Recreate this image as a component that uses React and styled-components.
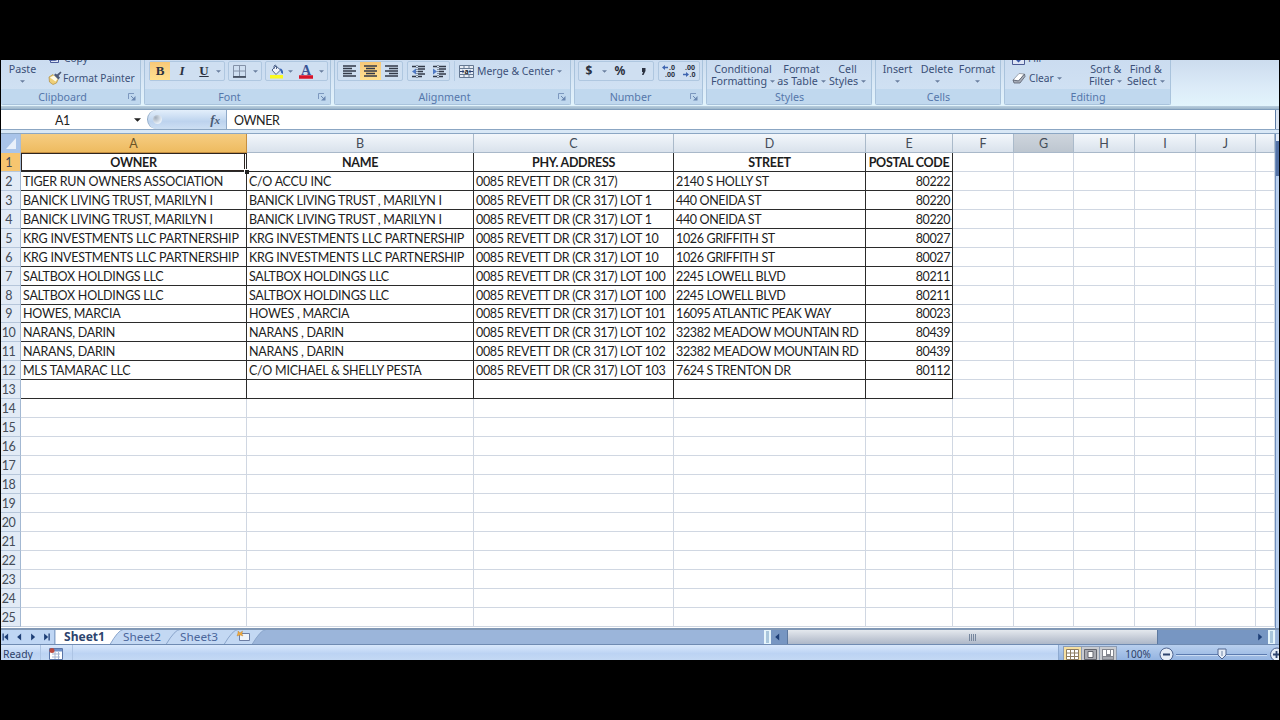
import styled, { createGlobalStyle, css } from 'styled-components';

const GlobalStyle = createGlobalStyle`
    * {
        box-sizing: border-box;
    }

    body {
        margin: 0;
        background: #000;
        overflow: hidden;
    }
`;

const COLUMNS = '20px 226px 227px 200px 192px 87px 61px 60px 61px 61px 60px 1fr';
const LETTERS = ['A', 'B', 'C', 'D', 'E', 'F', 'G', 'H', 'I', 'J', ''];

// Letter spacing of each data column
const TRACKING = ['-0.24px', '-0.26px', '-0.32px', '-0.36px', '-0.4px'];

const ROWS = [
    ['OWNER', 'NAME', 'PHY. ADDRESS', 'STREET', 'POSTAL CODE'],
    ['TIGER RUN OWNERS ASSOCIATION', 'C/O ACCU INC', '0085 REVETT DR (CR 317)', '2140 S HOLLY ST', '80222'],
    ['BANICK LIVING TRUST, MARILYN I', 'BANICK LIVING TRUST , MARILYN I', '0085 REVETT DR (CR 317) LOT 1', '440 ONEIDA ST', '80220'],
    ['BANICK LIVING TRUST, MARILYN I', 'BANICK LIVING TRUST , MARILYN I', '0085 REVETT DR (CR 317) LOT 1', '440 ONEIDA ST', '80220'],
    ['KRG INVESTMENTS LLC PARTNERSHIP', 'KRG INVESTMENTS LLC PARTNERSHIP', '0085 REVETT DR (CR 317) LOT 10', '1026 GRIFFITH ST', '80027'],
    ['KRG INVESTMENTS LLC PARTNERSHIP', 'KRG INVESTMENTS LLC PARTNERSHIP', '0085 REVETT DR (CR 317) LOT 10', '1026 GRIFFITH ST', '80027'],
    ['SALTBOX HOLDINGS LLC', 'SALTBOX HOLDINGS LLC', '0085 REVETT DR (CR 317) LOT 100', '2245 LOWELL BLVD', '80211'],
    ['SALTBOX HOLDINGS LLC', 'SALTBOX HOLDINGS LLC', '0085 REVETT DR (CR 317) LOT 100', '2245 LOWELL BLVD', '80211'],
    ['HOWES, MARCIA', 'HOWES , MARCIA', '0085 REVETT DR (CR 317) LOT 101', '16095 ATLANTIC PEAK WAY', '80023'],
    ['NARANS, DARIN', 'NARANS , DARIN', '0085 REVETT DR (CR 317) LOT 102', '32382 MEADOW MOUNTAIN RD', '80439'],
    ['NARANS, DARIN', 'NARANS , DARIN', '0085 REVETT DR (CR 317) LOT 102', '32382 MEADOW MOUNTAIN RD', '80439'],
    ['MLS TAMARAC LLC', 'C/O MICHAEL & SHELLY PESTA', '0085 REVETT DR (CR 317) LOT 103', '7624 S TRENTON DR', '80112'],
    ['', '', '', '', '']
];

const Window = styled.div`
    width: 1278px;
    height: 600px;
    margin: 60px 0 0 1px;
    display: flex;
    flex-direction: column;
    overflow: hidden;
    background: #fff;
    font-family: 'Noto Sans', sans-serif;
    font-size: 10.7px;
    color: #3b5078;
    white-space: nowrap;
`;

/* ---------- ribbon ---------- */

const Ribbon = styled.div`
    height: 46px;
    flex: none;
    display: flex;
    gap: 3px;
    background: linear-gradient(#ccdcee, #dcebf8 60%, #e2f4fc);
`;

const Group = styled.div`
    width: ${p => p.$width}px;
    height: 45px;
    flex: none;
    display: flex;
    flex-direction: column;
    overflow: hidden;
    border: solid #a9c3dc;
    border-width: 0 1px 1px ${p => (p.$first ? 0 : '1px')};
    border-radius: 0 0 2px 2px;
    background: linear-gradient(#cbdcf0, #d2e3f4);
`;

const GroupBody = styled.div`
    height: 29px;
    flex: none;
    display: flex;
    align-items: flex-end;
    padding-left: ${p => p.$pad || 0}px;
    gap: ${p => p.$gap || 0}px;
`;

const GroupLabel = styled.div`
    height: 15px;
    flex: none;
    display: flex;
    align-items: center;
    padding-right: ${p => (p.$plain ? 0 : 4)}px;
    background: #c0d8ee;
    color: #5577ab;

    span {
        flex: 1;
        text-align: center;
        padding-right: ${p => (p.$plain ? 0 : 4)}px;
        padding-left: ${p => (p.$plain ? 1 : 0)}px;
    }
`;

const ToolBox = styled.div`
    width: ${p => p.$width}px;
    height: 20px;
    margin-bottom: 8px;
    flex: none;
    display: flex;
    align-items: center;
    justify-content: space-between;
    padding-right: ${p => (p.$tight ? 0 : 3)}px;
    border: 1px solid #afc7e0;
    border-radius: 2px;
    background: #cfdff1;
`;

const Tool = styled.div`
    width: ${p => p.$width || 20}px;
    height: 18px;
    display: flex;
    align-items: center;
    justify-content: center;
    color: #2b3140;
    ${p => p.$active && css`
        background: linear-gradient(#f7c877, #fbd588 50%, #ffe08c);
    `}
`;

const Glyph = styled.span`
    font-family: ${p => (p.$sans ? "'Noto Sans', sans-serif" : "'Liberation Serif', serif")};
    font-size: ${p => p.$size || 13}px;
    font-weight: ${p => (p.$light ? 400 : 700)};
    font-style: ${p => (p.$italic ? 'italic' : 'normal')};
    text-decoration: ${p => (p.$underline ? 'underline' : 'none')};
    line-height: 18px;
`;

const Merge = styled.div`
    height: 20px;
    margin-bottom: 8px;
    display: flex;
    align-items: center;
    gap: 3px;
    padding-left: 4px;
    border-left: 1px solid #b4cbe3;
    font-size: 10.4px;
`;

const BigButton = styled.div`
    width: ${p => p.$width}px;
    height: 26px;
    flex: none;
    display: flex;
    flex-direction: column;
    align-items: center;
    line-height: 12px;

    div {
        display: flex;
        align-items: center;
        justify-content: center;
        gap: 3px;
        height: 12px;
        flex: none;
    }
`;

const SmallStack = styled.div`
    height: 29px;
    display: flex;
    flex-direction: column;
    justify-content: flex-end;
    padding-bottom: 1px;
    margin-left: ${p => p.$push || 0}px;
`;

const SmallButton = styled.div`
    height: 20px;
    flex: none;
    display: flex;
    align-items: center;
    gap: ${p => p.$gap || 3}px;
    font-size: 10.2px;
    line-height: 20px;
`;

const RibbonEdge = styled.div`
    height: 4px;
    flex: none;
    background: linear-gradient(#b9cfdf, #9db6ca);
    border-bottom: 1px solid #7f9dbb;
`;

/* ---------- formula bar ---------- */

const FormulaBar = styled.div`
    height: 19px;
    flex: none;
    display: flex;
    align-items: center;
    background: #fff;
    color: #222;
    font-family: Lato, sans-serif;
    font-size: 12.5px;
    letter-spacing: -0.4px;
`;

const NameBox = styled.div`
    width: 146px;
    display: flex;
    align-items: center;
    padding-right: 6px;

    span {
        flex: 1;
        padding: 2px 10px 0 0;
        text-align: center;
    }
`;

const FunctionBox = styled.div`
    width: 80px;
    height: 19px;
    display: flex;
    align-items: center;
    justify-content: space-between;
    padding: 0 6px 0 5px;
    border-right: 1px solid #8fa9c8;
    border-left: 1px solid #92acc9;
    border-radius: 10px 0 0 10px;
    background: linear-gradient(#e3effb, #bdd3ee 60%, #cddff3);
    font: italic 700 13px 'Liberation Serif', serif;
    letter-spacing: 0;
    color: #4b5a74;

    small {
        font-size: 11px;
    }
`;

const Knob = styled.i`
    width: 9px;
    height: 9px;
    border-radius: 50%;
    background: radial-gradient(circle at 30% 30%, #a3aebb, #e8f0f8 70%);
`;

const FormulaText = styled.div`
    flex: 1;
    padding: 2px 0 0 7px;
`;

const BarCap = styled.div`
    width: 4px;
    height: 19px;
    background: #dbe5f2;
    border-left: 1px solid #5f7ea6;
`;

const FormulaEdge = styled.div`
    height: 5px;
    flex: none;
    background: #d9e8f6;
    border: solid #8ba6c3;
    border-width: 1px 0;
`;

/* ---------- grid ---------- */

const SheetArea = styled.div`
    height: 494px;
    flex: none;
    display: flex;
    overflow: hidden;
`;

const Grid = styled.div`
    width: 1274px;
    flex: none;
`;

const SheetRow = styled.div`
    height: 18.96px;
    display: grid;
    grid-template-columns: ${COLUMNS};
`;

const HeaderRow = styled(SheetRow)`
    height: 18.9px;
`;

const ColumnHead = styled.div`
    display: flex;
    align-items: center;
    justify-content: center;
    padding-top: 3px;
    border-right: 1px solid #aabaca;
    border-bottom: 1px solid #a9b8c9;
    background: linear-gradient(#f3f7fb, #d9e2ec);
    font-family: Lato, sans-serif;
    font-size: 12.5px;
    line-height: 14px;
    color: #444c58;
    ${p => p.$hover && css`
        background: linear-gradient(#ced5dd, #bdc6d0);
    `}
    ${p => p.$selected && css`
        background: linear-gradient(#f6cd82, #eebb60);
        border-color: #c58f40;
        color: #6b5327;
    `}
`;

const Corner = styled.div`
    display: flex;
    align-items: flex-end;
    justify-content: flex-end;
    padding: 0 4px 4px 0;
    border-right: 1px solid #a9bdd6;
    background: #a9c4e9;

    i {
        border: solid transparent;
        border-width: 0 0 11px 10px;
        border-bottom-color: #e8f0fa;
    }
`;

const RowHead = styled.div`
    display: flex;
    align-items: center;
    justify-content: center;
    padding: 2px 4px 0 0;
    border-right: 1px solid #a3b8d2;
    border-bottom: 1px solid #b6c6da;
    background: ${p => (p.$selected ? '#f7c56f' : '#e2ebf6')};
    font-family: Lato, sans-serif;
    font-size: 12.5px;
    letter-spacing: -0.6px;
    line-height: 14px;
    color: #444c58;
`;

const Cell = styled.div`
    position: relative;
    display: flex;
    align-items: center;
    justify-content: ${p => p.$align || 'flex-start'};
    padding: 2px 2px 0 2px;
    border: solid ${p => (p.$filled ? '#2b2b2b' : '#d0d7e2')};
    border-width: 0 1px 1px 0;
    background: #fff;
    color: #1d1d1d;
    font-family: Lato, sans-serif;
    font-size: 12.5px;
    line-height: 14px;
    font-weight: ${p => (p.$bold ? 700 : 400)};
    letter-spacing: ${p => (p.$bold ? '-0.3px' : p.$tracking)};
    ${p => p.$selected && css`
        box-shadow: inset 1px 1px #2c2420, inset 0 -1px #2c2420, inset -1px 0 #fff, inset -2px 0 #2c2420;
    `}
`;

const FillHandle = styled.i`
    position: absolute;
    right: -3px;
    bottom: -3px;
    width: 5px;
    height: 5px;
    z-index: 1;
    background: #222;
    border: 1px solid #fff;
    border-width: 1px 0 0 1px;
`;

const VerticalScroll = styled.div`
    flex: 1;
    border-left: 1px solid #6f8fbd;
    background: linear-gradient(#e4edf7 0 7px, #5573a6 7px 42px, #b8cfee 42px);
`;

/* ---------- sheet tabs ---------- */

const TabBar = styled.div`
    height: 17px;
    flex: none;
    display: flex;
    border-top: 2px solid #8198b5;
    border-bottom: 1px solid #6f8bb2;
    background: #9bb5da;
`;

const TabNav = styled.div`
    width: 54px;
    display: flex;
    align-items: center;
    background: #bfd6f4;
    border-right: 1px solid #8da9cf;
`;

const Tabs = styled.svg`
    width: 214px;
    height: 14px;
    flex: none;
    font-family: 'Noto Sans', sans-serif;
    font-size: 11.5px;
`;

const Splitter = styled.div`
    width: 7px;
    margin-left: ${p => p.$push || 0}px;
    border: solid #e6f5fb;
    border-width: 1px 2px;
    background: #a9c6dc;
`;

const ScrollButton = styled.div`
    width: ${p => p.$width}px;
    display: flex;
    align-items: center;
    justify-content: ${p => p.$justify || 'center'};
    background: #7796c2;
`;

const Thumb = styled.div`
    width: 371px;
    display: flex;
    align-items: center;
    justify-content: center;
    gap: 1px;
    border: solid #5c789f;
    border-width: 0 1px;
    background: linear-gradient(#e4e8ee, #c3cad6 60%, #adb8c9);

    i {
        width: 1px;
        height: 7px;
        background: #76869d;
    }
`;

/* ---------- status bar ---------- */

const StatusBar = styled.div`
    height: 17px;
    flex: none;
    display: flex;
    align-items: flex-start;
    background: linear-gradient(#d9e8fc, #bcd3f3 50%, #c6daf4);
    color: #2d4168;
    font-size: 10.4px;
    line-height: 19px;
`;

const Ready = styled.div`
    width: 40px;
    height: 16px;
    padding-left: 2px;
    border-right: 1px solid #adc4e4;
`;

const MacroButton = styled.div`
    width: 32px;
    height: 16px;
    display: flex;
    padding: 2px 0 0 8px;
    border-right: 1px solid #adc4e4;
`;

const StatusRight = styled.div`
    width: 221px;
    height: 17px;
    margin-left: auto;
    display: flex;
    border-left: 1px solid #8eaad0;
    background: linear-gradient(#b8cfee, #8fb0df);
`;

const Views = styled.div`
    width: 54px;
    height: 16px;
    margin: 1px 0 0 4px;
    border: 1px solid #8c9cb4;
    border-bottom: 0;
    background: #c8cbd0;
`;

const ZoomText = styled.div`
    width: 42px;
    text-align: center;
    font-size: 10px;
`;

/* ---------- icons ---------- */

const Arrow = ({ color = '#6a7f9f', big }) => (
    <svg width={big ? 7 : 5} height={big ? 4 : 3} viewBox="0 0 6 3">
        <path d="M0 0h6L3 3z" fill={color} />
    </svg>
);

const Launcher = () => (
    <svg width="8" height="8" viewBox="0 0 8 8">
        <path d="M.5 6V.5H6" fill="none" stroke="#7c98bf" />
        <path d="M3 3l3 3" stroke="#6b88b2" />
        <path d="M7.500 3v4.500H3z" fill="#6b88b2" />
    </svg>
);

const Brush = () => (
    <svg width="14" height="14" viewBox="0 0 14 14">
        <path d="M1 6l4-2.500L10 8.500l-1.500 3.500L5 13.500 1.500 11z" fill="#efcf78" stroke="#b08c40" strokeWidth=".7" />
        <path d="M2 6.500l4-2 3.500 3.500-2 2.500z" fill="#fffbe9" />
        <path d="M6 4l4.500 4.500 1.500-2-1.500-1.500L13.500 1.500 12.500.5 9 3.500 7.500 2.500z" fill="#4f5a78" />
    </svg>
);

const CopyIcon = () => (
    <svg width="12" height="14" viewBox="0 0 12 14">
        <path d="M1.500 1.500h6v8h-6zM2.500 3.500h8v8h-8z" fill="#dfe6f6" stroke="#4b5c9b" />
        <path d="M4 7h5M4 9h5" stroke="#6a79b5" />
    </svg>
);

const Lines = ({ align }) => {
    const short = { left: 1, center: 3, right: 5 }[align];
    return (
        <svg width="15" height="12" viewBox="0 0 15 12">
            <path
                d={`M1 1h13M${short} 3.500h9M1 6h13M${short} 8.500h9M1 11h13`}
                stroke="#333a48"
                strokeWidth="1.300"
            />
        </svg>
    );
};

const Indent = ({ out }) => (
    <svg width="15" height="13" viewBox="0 0 15 13">
        <path d="M1 1.500h4M7 1.500h7M7 4h7M7 6.500h5M7 9h7M1 11.500h4M7 11.500h4" stroke="#333a48" strokeWidth="1.700" />
        <path d={out ? 'M5 3.500v6L1 6.500z' : 'M1 3.500v6l4-3z'} fill="#4f79c4" />
        <path d="M6 0v13" stroke="#333a48" strokeDasharray="1 1" />
    </svg>
);

const BordersIcon = () => (
    <svg width="13" height="13" viewBox="0 0 13 13">
        <path d="M.5.5h12v11H.5zM6.500.5v11M.5 6h12" fill="none" stroke="#8492a8" />
        <path d="M0 12h13" stroke="#333c4c" strokeWidth="1.500" />
    </svg>
);

const Bucket = () => (
    <svg width="15" height="15" viewBox="0 0 15 15">
        <path d="M3 6l4-4 4.500 4L7 10.500z" fill="#f0f4fb" stroke="#51658c" />
        <path d="M5 5V2q1-2 2.500 0v3" fill="none" stroke="#51658c" />
        <path d="M10.500 4.500q4 0 3.500 5.500-2.500-1-2.500-3.500z" fill="#3564b8" />
        <path d="M1 11h13v3.500H1z" fill="#fafa21" />
    </svg>
);

const FontColor = () => (
    <svg width="16" height="15" viewBox="0 0 16 15">
        <text x="8" y="10.500" textAnchor="middle" fontFamily="Liberation Serif, serif" fontSize="14" fontWeight="700" fill="#3b5495">A</text>
        <path d="M1 11.200h14v3.500H1z" fill="#d8142a" />
    </svg>
);

const MergeIcon = () => (
    <svg width="15" height="13" viewBox="0 0 15 13">
        <path d="M.5.5h14v12H.5zM.5 3.500h14M.5 9.500h14M5 .5v3M10 .5v3M5 9.500v3M10 9.500v3" fill="#e6ecf5" stroke="#657892" />
        <path d="M1 6.500h4M10 6.500h4" stroke="#2c4272" />
        <path d="M3.500 4.500v4l2-2zM11.500 4.500v4l-2-2z" fill="#2c4272" />
        <text x="7.500" y="9" textAnchor="middle" fontSize="7" fontWeight="700" fill="#222">a</text>
    </svg>
);

const Decimals = ({ more }) => (
    <svg width="17" height="16" viewBox="0 0 17 16" fontFamily="Noto Sans, sans-serif" fontSize="7" fontWeight="700" fill="#2c3446">
        <text x={more ? 8 : 4} y="7">{more ? '.0' : '.00'}</text>
        <text x={more ? 4 : 8.5} y="14">{more ? '.00' : '.0'}</text>
        <path d={more ? 'M1 4.500l3-2.500v1.800h3v1.400H4V7z' : 'M8 11.500L5 9v1.800H2v1.400h3V14z'} fill="#3f65b0" />
    </svg>
);

const Eraser = () => (
    <svg width="14" height="12" viewBox="0 0 14 12">
        <path d="M1 8l6-6.500 5.500.5L6.500 9z" fill="#fff" stroke="#8a909c" strokeWidth=".8" />
        <path d="M6.500 9l6-7 .5 2.500L8 11H2L1 8z" fill="#a9afba" stroke="#59606e" strokeWidth=".8" />
    </svg>
);

const FillIcon = () => (
    <svg width="13" height="13" viewBox="0 0 13 13">
        <path d="M.5.5h12v12H.5z" fill="#dde4f5" stroke="#4b5a94" />
        <path d="M6.500 10.500l-3-3h2V3h2v4.500h2z" fill="#3553a4" />
    </svg>
);

const NavIcon = ({ left, edge }) => (
    <svg width="13.400" height="8" viewBox="1 0 13 8">
        <path d={left ? 'M8 .5v7L4 4z' : 'M4 .5v7L8 4z'} fill="#1d3e76" />
        {edge && <path d={left ? 'M3 .5v7' : 'M9 .5v7'} stroke="#1d3e76" strokeWidth="1.300" />}
    </svg>
);

const SheetTabs = () => (
    <Tabs viewBox="0 0 214 14">
        <g stroke="#8aa5cb">
            <path d="M160 14.500v-15h51q-5 0-14 15z" fill="#c3d8f3" />
            <path d="M105 14.500v-15h78q-5 0-14 15z" fill="#c3d8f3" />
            <path d="M45 14.500v-15h80q-5 0-14 15z" fill="#c3d8f3" />
            <path d="M0-.5h68q-5 1-13 15H0z" fill="#fff" />
        </g>
        <text x="9" y="11.300" textLength="41" lengthAdjust="spacingAndGlyphs" fontWeight="700" fill="#2d446e">Sheet1</text>
        <text x="68" y="11.300" textLength="38" lengthAdjust="spacingAndGlyphs" fill="#4a669b">Sheet2</text>
        <text x="125" y="11.300" textLength="38" lengthAdjust="spacingAndGlyphs" fill="#4a669b">Sheet3</text>
        <path d="M184.500 3.500h10v7h-10z" fill="#f0f4fb" stroke="#6c7da3" />
        <path d="M183 1l2 2 2.500-2-.5 3 1 2-3-1-3 1 1-3z" fill="#f0a93c" stroke="#b9803a" strokeWidth=".4" />
    </Tabs>
);

const MacroIcon = () => (
    <svg width="14" height="13" viewBox="0 0 14 13">
        <path d="M.5 1.500h13v11H.5z" fill="#fff" stroke="#5b76a8" />
        <path d="M1 2h12v2.500H1z" fill="#6f90c9" />
        <path d="M3 7h8M3 10h8M6 5v7M9.500 5v7" stroke="#a3b5d3" />
        <circle cx="3" cy="3.500" r="2.500" fill="#bb4a40" />
    </svg>
);

const ViewIcons = () => (
    <svg width="52" height="15" viewBox="0 0 52 15" display="block">
        <path d="M0 0h17v15H0z" fill="#f6dfa0" />
        <path d="M2.500 2.500h12v10h-12zM2.500 6h12M2.500 9.500h12M6.500 2.500v10M10.500 2.500v10" fill="#fff" stroke="#8d7c60" />
        <path d="M17.500 0v15M35.500 0v15" stroke="#8c9cb4" />
        <path d="M20.500 2.500h12v10h-12z" fill="#a9abb2" stroke="#63666f" />
        <path d="M24 4.500h5v6h-5z" fill="#fff" stroke="#63666f" />
        <path d="M38 2h12v11H38z" fill="#83868e" />
        <path d="M39 3h3v6h-3zM43 3h3v4h-3zM47 3h2v6h-2z" fill="#fff" />
        <path d="M39 11h10" stroke="#c9ccd2" />
    </svg>
);

const ZoomSlider = () => (
    <svg width="120" height="17" viewBox="0 0 120 17">
        <path d="M17 9.500h91" stroke="#5b7bb0" />
        <path d="M17 10.500h91" stroke="#c9dbf3" />
        <g fill="#e6edf7" stroke="#4f6490">
            <circle cx="7.500" cy="9.500" r="6.500" />
            <circle cx="118" cy="9.500" r="6.500" />
            <path d="M59 4h8v6l-4 4-4-4z" />
        </g>
        <path d="M63 6v5" stroke="#7186a8" />
        <path d="M4 9.500h7M114 9.500h7M117.500 6v7" stroke="#2f456f" strokeWidth="1.800" />
    </svg>
);

const Label = ({ children, plain }) => (
    <GroupLabel $plain={plain}>
        <span>{children}</span>
        {!plain && <Launcher />}
    </GroupLabel>
);

const Big = ({ width, top, bottom }) => (
    <BigButton $width={width}>
        <div>{top}</div>
        <div>{bottom}<Arrow /></div>
    </BigButton>
);

function RibbonBar() {
    return (
        <Ribbon>
            <Group $width={140} $first>
                <GroupBody>
                    <Big width={43} top="Paste" />
                    <SmallStack $push={4}>
                        <SmallButton $gap={4}><CopyIcon />Copy</SmallButton>
                        <SmallButton $gap={1}><Brush />Format Painter</SmallButton>
                    </SmallStack>
                </GroupBody>
                <Label>Clipboard</Label>
            </Group>
            <Group $width={187}>
                <GroupBody $pad={4} $gap={3}>
                    <ToolBox $width={76}>
                        <Tool $active><Glyph>B</Glyph></Tool>
                        <Tool><Glyph $italic>I</Glyph></Tool>
                        <Tool><Glyph $underline>U</Glyph></Tool>
                        <Arrow />
                    </ToolBox>
                    <ToolBox $width={34}>
                        <Tool><BordersIcon /></Tool>
                        <Arrow />
                    </ToolBox>
                    <ToolBox $width={63}>
                        <Tool $width={20}><Bucket /></Tool>
                        <Arrow />
                        <Tool $width={22}><FontColor /></Tool>
                        <Arrow />
                    </ToolBox>
                </GroupBody>
                <Label>Font</Label>
            </Group>
            <Group $width={237}>
                <GroupBody $pad={2} $gap={4}>
                    <ToolBox $width={66} $tight>
                        <Tool $width={22}><Lines align="left" /></Tool>
                        <Tool $width={21} $active><Lines align="center" /></Tool>
                        <Tool $width={21}><Lines align="right" /></Tool>
                    </ToolBox>
                    <ToolBox $width={43} $tight>
                        <Tool><Indent out /></Tool>
                        <Tool><Indent /></Tool>
                    </ToolBox>
                    <Merge><MergeIcon />Merge &amp; Center<Arrow /></Merge>
                </GroupBody>
                <Label>Alignment</Label>
            </Group>
            <Group $width={129}>
                <GroupBody $pad={3} $gap={4}>
                    <ToolBox $width={76} $tight>
                        <Tool><Glyph $sans $size={12}>$</Glyph></Tool>
                        <Arrow />
                        <Tool $width={20}><Glyph $sans $size={12}>%</Glyph></Tool>
                        <Tool $width={20}>
                            <svg width="5" height="7" viewBox="0 0 5 7">
                                <path d="M1 0h3.500v3L2.500 7H1l1-3H1z" fill="#2b3140" />
                            </svg>
                        </Tool>
                    </ToolBox>
                    <ToolBox $width={42} $tight>
                        <Tool><Decimals more /></Tool>
                        <Tool><Decimals /></Tool>
                    </ToolBox>
                </GroupBody>
                <Label>Number</Label>
            </Group>
            <Group $width={166}>
                <GroupBody $pad={3}>
                    <Big width={66} top="Conditional" bottom="Formatting" />
                    <Big width={51} top="Format" bottom="as Table" />
                    <Big width={41} top="Cell" bottom="Styles" />
                </GroupBody>
                <Label plain>Styles</Label>
            </Group>
            <Group $width={126}>
                <GroupBody $pad={2}>
                    <Big width={39} top="Insert" />
                    <Big width={40} top="Delete" />
                    <Big width={40} top="Format" />
                </GroupBody>
                <Label plain>Cells</Label>
            </Group>
            <Group $width={167}>
                <GroupBody $pad={7}>
                    <SmallStack>
                        <SmallButton><FillIcon />Fill</SmallButton>
                        <SmallButton $gap={3}><Eraser />Clear<Arrow /></SmallButton>
                    </SmallStack>
                    <BigButton $width={24} />
                    <Big width={40} top="Sort &amp;" bottom="Filter" />
                    <Big width={40} top="Find &amp;" bottom="Select" />
                </GroupBody>
                <Label plain>Editing</Label>
            </Group>
        </Ribbon>
    );
}

function Sheet() {
    const rows = Array.from({ length: 25 }, (_, i) => ROWS[i] || []);

    return (
        <SheetArea>
            <Grid>
                <HeaderRow>
                    <Corner><i /></Corner>
                    {LETTERS.map(l => (
                        <ColumnHead key={l} $selected={l === 'A'} $hover={l === 'G'}>{l}</ColumnHead>
                    ))}
                </HeaderRow>
                {rows.map((row, r) => (
                    <SheetRow key={r}>
                        <RowHead $selected={r === 0}>{r + 1}</RowHead>
                        {LETTERS.map((l, c) => (
                            <Cell
                                key={l}
                                $filled={r < ROWS.length && c < 5}
                                $bold={r === 0}
                                $tracking={TRACKING[c] || 0}
                                $align={r === 0 ? 'center' : c === 4 ? 'flex-end' : undefined}
                                $selected={r === 0 && c === 0}
                            >
                                {row[c]}
                                {r === 0 && c === 0 && <FillHandle />}
                            </Cell>
                        ))}
                    </SheetRow>
                ))}
            </Grid>
            <VerticalScroll />
        </SheetArea>
    );
}

export default function App() {
    return (
        <>
            <GlobalStyle />
            <Window>
                <RibbonBar />
                <RibbonEdge />
                <FormulaBar>
                    <NameBox><span>A1</span><Arrow big color="#222" /></NameBox>
                    <FunctionBox><Knob /><span>f<small>x</small></span></FunctionBox>
                    <FormulaText>OWNER</FormulaText>
                    <BarCap />
                </FormulaBar>
                <FormulaEdge />
                <Sheet />
                <TabBar>
                    <TabNav>
                        <NavIcon left edge />
                        <NavIcon left />
                        <NavIcon />
                        <NavIcon edge />
                    </TabNav>
                    <SheetTabs />
                    <Splitter $push={495} />
                    <ScrollButton $width={16}><NavIcon left /></ScrollButton>
                    <Thumb><i /><i /><i /><i /></Thumb>
                    <ScrollButton $width={110} $justify="flex-end"><NavIcon /></ScrollButton>
                    <Splitter />
                </TabBar>
                <StatusBar>
                    <Ready>Ready</Ready>
                    <MacroButton><MacroIcon /></MacroButton>
                    <StatusRight>
                        <Views><ViewIcons /></Views>
                        <ZoomText>100%</ZoomText>
                        <ZoomSlider />
                    </StatusRight>
                </StatusBar>
            </Window>
        </>
    );
}
